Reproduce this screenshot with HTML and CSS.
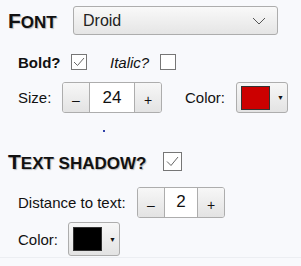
FILE: index.html
```html
<!DOCTYPE html>
<html lang="en">
<head>
    <meta charset="UTF-8">
    <title>Text settings</title>
    <link rel="stylesheet" href="styles.css">
</head>
<body>
    <div class="panel">

        <!-- Font -->
        <div class="head">
            <h2 class="head-title"><span class="cap">F</span>ONT</h2>
            <div class="select">
                <span>Droid</span>
                <svg class="chevron" width="14" height="8" viewBox="0 0 14 8"><polyline points="1,1 7,7 13,1" fill="none" stroke="#555" stroke-width="1"/></svg>
            </div>
        </div>

        <div class="row row-check">
            <span class="label bold-label">Bold?</span>
            <span class="checkbox"><svg width="14" height="14" viewBox="0 0 14 14"><polyline points="2,7 5.5,10.5 12,3" fill="none" stroke="#666" stroke-width="1"/></svg></span>
            <span class="label italic-label">Italic?</span>
            <span class="checkbox"></span>
        </div>

        <div class="row row-size">
            <span class="label size-label">Size:</span>
            <div class="spinner">
                <span class="spin-btn minus">–</span>
                <span class="spin-value wide">24</span>
                <span class="spin-btn">+</span>
            </div>
            <span class="label color-label">Color:</span>
            <div class="color-btn">
                <span class="swatch red"></span>
                <span class="arrow">▼</span>
            </div>
        </div>

        <div class="dot-row"><span class="dot"></span></div>

        <!-- Text shadow -->
        <div class="head">
            <h2 class="head-title shadow-title"><span class="cap">T</span>EXT SHADOW?</h2>
            <span class="checkbox big"><svg width="17" height="17" viewBox="0 0 17 17"><polyline points="3,8.5 7,12.5 14,4" fill="none" stroke="#666" stroke-width="1"/></svg></span>
        </div>

        <div class="row row-distance">
            <span class="label distance-label">Distance to text:</span>
            <div class="spinner">
                <span class="spin-btn minus">–</span>
                <span class="spin-value">2</span>
                <span class="spin-btn">+</span>
            </div>
        </div>

        <div class="row row-color">
            <span class="label shadow-color-label">Color:</span>
            <div class="color-btn tall">
                <span class="swatch black"></span>
                <span class="arrow">▼</span>
            </div>
        </div>

    </div>
</body>
</html>
```

FILE: styles.css
```css
body {
    margin: 0;
    background: #f8f9fc;
    font-family: 'Liberation Sans', Arial, sans-serif;
    font-size: 15px;
    color: #111;
}

.panel {
    padding: 6px 8px 0;
    height: 251px;
    border-bottom: 1px solid #eceef2;
}

.head {
    display: flex;
    align-items: center;
    height: 29px;
}

.head-title {
    margin: 0;
    width: 65px;
    font-size: 17px;
    font-weight: bold;
    color: #111;
    text-shadow: 1px 1px 1px rgba(0, 0, 0, 0.25);
}

.head-title .cap {
    font-size: 21px;
}

.shadow-title {
    width: auto;
    margin-right: 17px;
}

.select {
    height: 27px;
    border: 1px solid #adadad;
    border-radius: 3px;
    background: linear-gradient(#f9f9f9, #e5e5e5);
    display: flex;
    align-items: center;
    justify-content: space-between;
    padding: 0 11px 0 9px;
    width: 183px;
    font-size: 16px;
    color: #222;
}

.row {
    display: flex;
    align-items: center;
    padding-left: 10px;
}

.row-check {
    margin-top: 17px;
    height: 20px;
}

.row-size {
    margin-top: 10px;
    height: 31px;
}

.row-distance {
    margin-top: 11px;
    height: 30px;
}

.row-color {
    margin-top: 5px;
    height: 34px;
}

.bold-label {
    font-weight: bold;
    width: 53px;
}

.italic-label {
    font-style: italic;
    width: 50px;
    margin-left: 23px;
}

.size-label { width: 44px; }
.color-label { width: 51px; margin-left: 23px; }
.distance-label { width: 119px; }
.shadow-color-label { width: 50px; }

.checkbox {
    width: 14px;
    height: 14px;
    border: 1px solid #767676;
    background: #fff;
    display: flex;
    align-items: center;
    justify-content: center;
}

.checkbox.big {
    width: 17px;
    height: 17px;
}

.spinner {
    display: flex;
    height: 29px;
    border: 1px solid #adadad;
    border-radius: 3px;
    overflow: hidden;
}

.spin-btn {
    width: 26px;
    display: flex;
    align-items: center;
    justify-content: center;
    padding-top: 5px;
    box-sizing: border-box;
    background: linear-gradient(#f7f7f7, #e3e3e3);
    font-size: 14px;
}

.spin-value {
    width: 32px;
    display: flex;
    align-items: center;
    justify-content: center;
    background: #fff;
    border-left: 1px solid #adadad;
    border-right: 1px solid #adadad;
    font-size: 17px;
}

.spin-value.wide { width: 44px; }

.color-btn {
    height: 29px;
    border: 1px solid #adadad;
    border-radius: 3px;
    background: linear-gradient(#f7f7f7, #e3e3e3);
    display: flex;
    align-items: center;
    padding-left: 4px;
    width: 46px;
}

.color-btn.tall { height: 32px; }

.swatch {
    width: 27px;
    height: 22px;
    border: 1px solid #333;
}

.red { background: #cc0000; }
.black { background: #000; }

.arrow {
    font-size: 7px;
    margin-left: 7px;
    color: #111;
}

.dot-row {
    height: 34px;
    box-sizing: border-box;
    padding: 17px 0 0 95px;
}

.dot {
    display: block;
    width: 2px;
    height: 2px;
    background: #3344aa;
}
```
